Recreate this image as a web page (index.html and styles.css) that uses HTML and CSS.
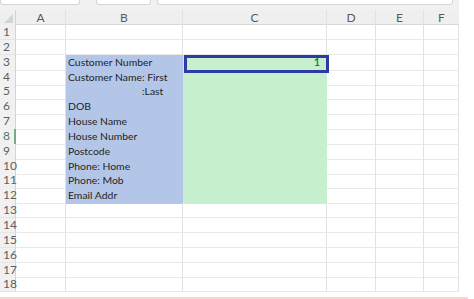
FILE: index.html
```
<!DOCTYPE html>
<html lang="en">
<head>
	<meta charset="UTF-8">
	<title>Customer sheet</title>
	<link rel="stylesheet" href="styles.css">
</head>
<body>
	<div class="toolbar">
		<div class="box box-name"></div>
		<div class="box box-mid"></div>
		<div class="box box-formula"></div>
	</div>
	<div class="sheet">
		<div class="row head">
			<div class="rh corner"><span class="tri"></span></div>
			<div class="ch">A</div><div class="ch">B</div><div class="ch">C</div><div class="ch">D</div><div class="ch">E</div><div class="ch">F</div>
		</div>
		<div class="row"><div class="rh">1</div><div class="c"></div><div class="c"></div><div class="c"></div><div class="c"></div><div class="c"></div><div class="c"></div></div>
		<div class="row"><div class="rh">2</div><div class="c"></div><div class="c"></div><div class="c"></div><div class="c"></div><div class="c"></div><div class="c"></div></div>
		<div class="row"><div class="rh">3</div><div class="c"></div><div class="c blue">Customer Number</div><div class="c green active"><span class="num">1</span><span class="sel"></span></div><div class="c"></div><div class="c"></div><div class="c"></div></div>
		<div class="row"><div class="rh">4</div><div class="c"></div><div class="c blue">Customer Name: First</div><div class="c green"></div><div class="c"></div><div class="c"></div><div class="c"></div></div>
		<div class="row"><div class="rh">5</div><div class="c"></div><div class="c blue indent">:Last</div><div class="c green"></div><div class="c"></div><div class="c"></div><div class="c"></div></div>
		<div class="row"><div class="rh">6</div><div class="c"></div><div class="c blue">DOB</div><div class="c green"></div><div class="c"></div><div class="c"></div><div class="c"></div></div>
		<div class="row"><div class="rh">7</div><div class="c"></div><div class="c blue">House Name</div><div class="c green"></div><div class="c"></div><div class="c"></div><div class="c"></div></div>
		<div class="row"><div class="rh mark">8</div><div class="c"></div><div class="c blue">House Number</div><div class="c green"></div><div class="c"></div><div class="c"></div><div class="c"></div></div>
		<div class="row"><div class="rh">9</div><div class="c"></div><div class="c blue">Postcode</div><div class="c green"></div><div class="c"></div><div class="c"></div><div class="c"></div></div>
		<div class="row"><div class="rh">10</div><div class="c"></div><div class="c blue">Phone: Home</div><div class="c green"></div><div class="c"></div><div class="c"></div><div class="c"></div></div>
		<div class="row"><div class="rh">11</div><div class="c"></div><div class="c blue">Phone: Mob</div><div class="c green"></div><div class="c"></div><div class="c"></div><div class="c"></div></div>
		<div class="row"><div class="rh">12</div><div class="c"></div><div class="c blue">Email Addr</div><div class="c green"></div><div class="c"></div><div class="c"></div><div class="c"></div></div>
		<div class="row"><div class="rh">13</div><div class="c"></div><div class="c"></div><div class="c"></div><div class="c"></div><div class="c"></div><div class="c"></div></div>
		<div class="row"><div class="rh">14</div><div class="c"></div><div class="c"></div><div class="c"></div><div class="c"></div><div class="c"></div><div class="c"></div></div>
		<div class="row"><div class="rh">15</div><div class="c"></div><div class="c"></div><div class="c"></div><div class="c"></div><div class="c"></div><div class="c"></div></div>
		<div class="row"><div class="rh">16</div><div class="c"></div><div class="c"></div><div class="c"></div><div class="c"></div><div class="c"></div><div class="c"></div></div>
		<div class="row"><div class="rh">17</div><div class="c"></div><div class="c"></div><div class="c"></div><div class="c"></div><div class="c"></div><div class="c"></div></div>
		<div class="row"><div class="rh">18</div><div class="c"></div><div class="c"></div><div class="c"></div><div class="c"></div><div class="c"></div><div class="c"></div></div>
	</div>
	<div class="tabs"></div>
</body>
</html>
```
FILE: styles.css
```
*{
	padding:0;
	margin:0;
	box-sizing:border-box;
}
body{
	width:474px;
	height:299px;
	overflow:hidden;
	background:#fff;
	font-family:Lato,"Open Sans",sans-serif;
	font-size:10.4px;
	color:#1e1e1e;
}
.toolbar{
	display:flex;
	gap:6px;
	height:10px;
	width:459px;
	background:#f1f1f1;
	padding-right:6px;
}
.box{
	height:5px;
	background:#fff;
	border:1px solid #d6d6d6;
	border-top:0;
	border-radius:0 0 3px 3px;
}
.box-name{width:80px;}
.box-mid{width:55px;margin-left:10px;}
.box-formula{flex:1;}
.sheet{
	width:459px;
}
.row{
	display:grid;
	grid-template-columns:16px 50px 117px 144px 49px 48px 35px;
	height:14.85px;
}
.row.head{
	height:15px;
	background:#efefef;
	border-bottom:1px solid #d9d9d9;
}
.ch{
	color:#5a5a5a;
	font-size:12px;
	line-height:15px;
	text-align:center;
	border-right:1px solid #e2e2e2;
}
.ch:last-child{border-right:0;}
.rh{
	background:#f1f1f1;
	border-right:1px solid #d4d4d4;
	border-bottom:1px solid #e6e6e6;
	color:#606060;
	font-size:12px;
	line-height:14px;
	padding-left:3px;
	position:relative;
}
.corner{
	border-bottom:0;
	background:#efefef;
}
.tri{
	position:absolute;
	right:2px;
	bottom:2px;
	width:0;
	height:0;
	border-left:9px solid transparent;
	border-bottom:9px solid #d4d4d4;
}
.rh.mark{
	color:#4f7d60;
	border-right:2px solid #7aa889;
}
.c{
	border-right:1px solid #e2e2e2;
	border-bottom:1px solid #e9e9e9;
	line-height:15px;
	padding-left:2px;
	white-space:nowrap;
	overflow:visible;
}
.blue{
	background:#b4c6e7;
	border-color:#b4c6e7;
}
.indent{padding-left:76px;}
.green{
	background:#c6efce;
	border-color:#c6efce;
}
.active{
	position:relative;
	text-align:right;
	padding-right:6px;
}
.num{
	color:#2a7a2a;
	font-weight:bold;
}
.sel{
	position:absolute;
	left:1px;
	top:0;
	right:-3px;
	bottom:-3px;
	border:3px solid #2e3aa6;
}
.tabs{
	margin-top:5px;
	height:3px;
	width:468px;
	background:#f7d6d6;
}
```
